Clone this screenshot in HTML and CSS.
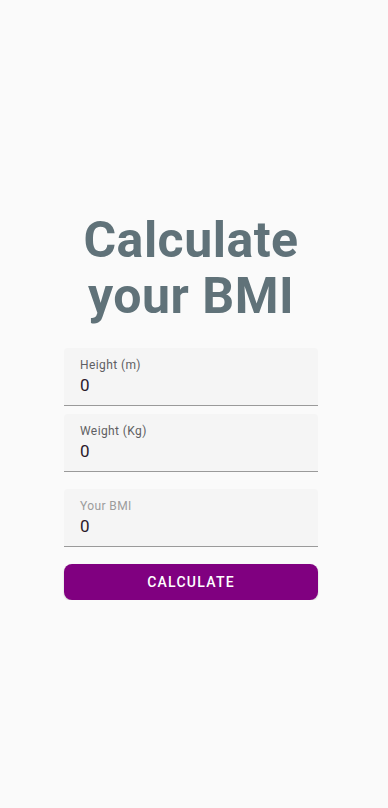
FILE: index.html
```html
<!DOCTYPE html>
<html>
<head>
<meta charset="utf-8">
<link rel="stylesheet" href="styles.css">
</head>
<body>
<main class="screen">
  <h1 class="title">Calculate your BMI</h1>
  <div class="field">
    <span class="label">Height (m)</span>
    <span class="value">0</span>
  </div>
  <div class="field field-next">
    <span class="label">Weight (Kg)</span>
    <span class="value">0</span>
  </div>
  <div class="field field-result">
    <span class="label label-disabled">Your BMI</span>
    <span class="value">0</span>
  </div>
  <button class="btn">CALCULATE</button>
</main>
</body>
</html>
```
FILE: styles.css
```css
html, body {
  margin: 0;
  padding: 0;
  background: #fafafa;
}
body {
  font-family: Roboto, "Noto Sans", sans-serif;
}
.screen {
  width: 254px;
  margin-left: 64px;
  padding-top: 212px;
  display: flex;
  flex-direction: column;
}
.title {
  margin: 0 0 24px 0;
  font-size: 50px;
  font-weight: 700;
  line-height: 56px;
  letter-spacing: 0.5px;
  text-align: center;
  color: #607279;
}
.field {
  box-sizing: border-box;
  height: 58px;
  background: #f5f5f5;
  border-radius: 4px 4px 0 0;
  border-bottom: 1px solid #9a9a9a;
  padding: 9px 16px 0 16px;
  display: flex;
  flex-direction: column;
}
.field-next {
  margin-top: 8px;
}
.field-result {
  margin-top: 17px;
}
.label {
  font-size: 12px;
  line-height: 16px;
  letter-spacing: 0.4px;
  color: #5f5f63;
}
.label-disabled {
  color: #9c9c9c;
}
.value {
  font-size: 17px;
  line-height: 24px;
  letter-spacing: 0.15px;
  color: #2b1a2b;
}
.btn {
  margin-top: 17px;
  height: 36px;
  border: none;
  border-radius: 8px;
  background: #800080;
  color: #ffffff;
  font-family: Roboto, "Noto Sans", sans-serif;
  font-size: 14px;
  font-weight: 500;
  letter-spacing: 1.25px;
  padding: 0;
  box-shadow: 0 1px 2px rgba(0,0,0,0.2);
}
```
